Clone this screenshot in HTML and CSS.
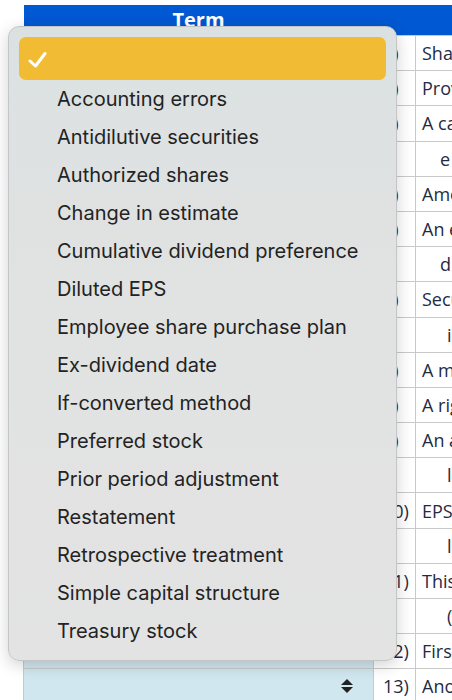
FILE: index.html
```html
<!DOCTYPE html>
<html lang="en">

<head>
    <title>Terms</title>
    <link rel="stylesheet" href="styles.css">
</head>

<body>
    <table class="terms">
        <thead>
            <tr>
                <th class="term">Term</th>
                <th class="num"></th>
                <th class="def"></th>
            </tr>
        </thead>
        <tbody>
            <tr><td class="pick"><span class="arrows"></span></td><td class="num">1)</td><td class="def">Shares of stock that have been issued and reacquired</td></tr>
            <tr><td class="pick"><span class="arrows"></span></td><td class="num">2)</td><td class="def">Provides for payment of dividends in arrears</td></tr>
            <tr><td class="pick"><span class="arrows"></span></td><td class="num">3)</td><td class="def">A capital structure with no potentially dilutive</td></tr>
            <tr><td class="pick"><span class="arrows"></span></td><td class="num"></td><td class="def"><span class="wrap w1">e</span></td></tr>
            <tr><td class="pick"><span class="arrows"></span></td><td class="num">4)</td><td class="def">Amounts reported in prior years are revised</td></tr>
            <tr><td class="pick"><span class="arrows"></span></td><td class="num">5)</td><td class="def">An employee benefit plan for buying shares</td></tr>
            <tr><td class="pick"><span class="arrows"></span></td><td class="num"></td><td class="def"><span class="wrap w2">d</span></td></tr>
            <tr><td class="pick"><span class="arrows"></span></td><td class="num">6)</td><td class="def">Securities that would increase EPS</td></tr>
            <tr><td class="pick"><span class="arrows"></span></td><td class="num"></td><td class="def"><span class="wrap w3">i</span></td></tr>
            <tr><td class="pick"><span class="arrows"></span></td><td class="num">7)</td><td class="def">A method of applying a change in principle</td></tr>
            <tr><td class="pick"><span class="arrows"></span></td><td class="num">8)</td><td class="def">A right to receive dividends before common</td></tr>
            <tr><td class="pick"><span class="arrows"></span></td><td class="num">9)</td><td class="def">An adjustment to retained earnings</td></tr>
            <tr><td class="pick"><span class="arrows"></span></td><td class="num"></td><td class="def"><span class="wrap w3">l</span></td></tr>
            <tr><td class="pick"><span class="arrows"></span></td><td class="num">10)</td><td class="def">EPS that includes potential common shares</td></tr>
            <tr><td class="pick"><span class="arrows"></span></td><td class="num"></td><td class="def"><span class="wrap w3">l</span></td></tr>
            <tr><td class="pick"><span class="arrows"></span></td><td class="num">11)</td><td class="def">This date determines who receives the dividend</td></tr>
            <tr><td class="pick"><span class="arrows"></span></td><td class="num"></td><td class="def"><span class="wrap w3">(</span></td></tr>
            <tr><td class="pick"><span class="arrows"></span></td><td class="num">12)</td><td class="def">First day the stock trades without the dividend</td></tr>
            <tr><td class="pick"><span class="arrows"></span></td><td class="num">13)</td><td class="def">Another name for the maximum number of shares</td></tr>
        </tbody>
    </table>

    <div class="menu">
        <div class="item chosen">
            <svg class="check" width="20" height="20" viewBox="0 0 20 20">
                <path d="M2 10 L7.5 15 L17 2.5" fill="none" stroke="#fff" stroke-width="3" stroke-linecap="round" stroke-linejoin="round" />
            </svg>
        </div>
        <div class="item">Accounting errors</div>
        <div class="item">Antidilutive securities</div>
        <div class="item">Authorized shares</div>
        <div class="item">Change in estimate</div>
        <div class="item">Cumulative dividend preference</div>
        <div class="item">Diluted EPS</div>
        <div class="item">Employee share purchase plan</div>
        <div class="item">Ex-dividend date</div>
        <div class="item">If-converted method</div>
        <div class="item">Preferred stock</div>
        <div class="item">Prior period adjustment</div>
        <div class="item">Restatement</div>
        <div class="item">Retrospective treatment</div>
        <div class="item">Simple capital structure</div>
        <div class="item">Treasury stock</div>
    </div>
</body>

</html>
```

FILE: styles.css
```css
html, body {
    margin: 0;
    padding: 0;
    background-color: #fff;
    overflow: hidden;
}

body {
    position: relative;
    width: 452px;
    height: 700px;
    font-family: "Open Sans", sans-serif;
}

table.terms {
    border-collapse: collapse;
    margin: 5px 0 0 23px;
    table-layout: fixed;
    width: 700px;
    color: #1f2b44;
    font-size: 18px;
}

table.terms th {
    background-color: #0058d2;
    color: #fff;
    font-size: 20px;
    font-weight: bold;
    height: 29px;
    padding: 0;
    vertical-align: top;
    line-height: 30px;
    border: none;
}

th.term {
    width: 350px;
}

th.num,
td.num {
    width: 42px;
}

table.terms td {
    height: 34.2px;
    padding: 0;
    border: 1px solid #c9c9c9;
    white-space: nowrap;
    overflow: hidden;
}

td.pick {
    background-color: #d0e7ef;
    border-left: none;
    position: relative;
}

td.num {
    text-align: left;
    padding-left: 9px !important;
}

td.def {
    padding-left: 6px !important;
}

.wrap {
    display: inline-block;
}

.w1 { margin-left: 18px; }
.w2 { margin-left: 18px; }
.w3 { margin-left: 25px; }

.arrows {
    position: absolute;
    right: 20px;
    top: 50%;
    width: 12px;
    height: 14px;
    margin-top: -7px;
}

.arrows:before,
.arrows:after {
    content: "";
    position: absolute;
    left: 0;
    border-left: 6px solid transparent;
    border-right: 6px solid transparent;
}

.arrows:before {
    top: 0;
    border-bottom: 6px solid #222;
}

.arrows:after {
    bottom: 0;
    border-top: 6px solid #222;
}

/* popup list of the select */
.menu {
    position: absolute;
    left: 8px;
    top: 26px;
    width: 367px;
    padding: 10px;
    border-radius: 11px;
    background: linear-gradient(180deg, #dbe1e1 0%, #e1e2e2 40%, #e3e3e3 100%);
    border: 1px solid #c4c6c6;
    box-shadow: 0 4px 16px rgba(0, 0, 0, 0.18);
    font-family: Inter, "Noto Sans", sans-serif;
    font-size: 20px;
    color: #232323;
}

.item {
    height: 38px;
    line-height: 38px;
    padding-left: 38px;
    white-space: nowrap;
}

.item.chosen {
    height: 43px;
    background-color: #f1bb33;
    border-radius: 7px;
    padding-left: 0;
    display: flex;
    align-items: center;
}

.check {
    margin-left: 9px;
    margin-top: 4px;
}
```
